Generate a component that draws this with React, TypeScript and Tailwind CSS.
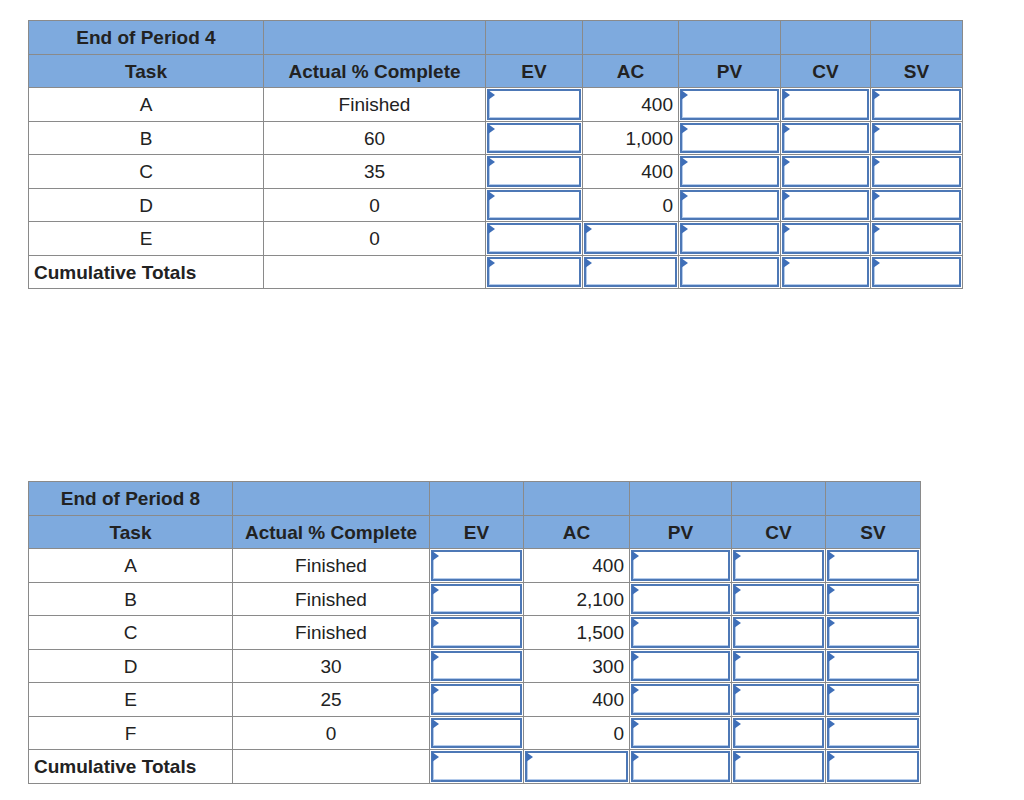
import React from "react";

type Cell = string | null; // null = input box

type Row = { task: string; actual: string; ev: Cell; ac: Cell; pv: Cell; cv: Cell; sv: Cell; total?: boolean };

const period4: Row[] = [
  { task: "A", actual: "Finished", ev: null, ac: "400", pv: null, cv: null, sv: null },
  { task: "B", actual: "60", ev: null, ac: "1,000", pv: null, cv: null, sv: null },
  { task: "C", actual: "35", ev: null, ac: "400", pv: null, cv: null, sv: null },
  { task: "D", actual: "0", ev: null, ac: "0", pv: null, cv: null, sv: null },
  { task: "E", actual: "0", ev: null, ac: null, pv: null, cv: null, sv: null },
  { task: "Cumulative Totals", actual: "", ev: null, ac: null, pv: null, cv: null, sv: null, total: true },
];

const period8: Row[] = [
  { task: "A", actual: "Finished", ev: null, ac: "400", pv: null, cv: null, sv: null },
  { task: "B", actual: "Finished", ev: null, ac: "2,100", pv: null, cv: null, sv: null },
  { task: "C", actual: "Finished", ev: null, ac: "1,500", pv: null, cv: null, sv: null },
  { task: "D", actual: "30", ev: null, ac: "300", pv: null, cv: null, sv: null },
  { task: "E", actual: "25", ev: null, ac: "400", pv: null, cv: null, sv: null },
  { task: "F", actual: "0", ev: null, ac: "0", pv: null, cv: null, sv: null },
  { task: "Cumulative Totals", actual: "", ev: null, ac: null, pv: null, cv: null, sv: null, total: true },
];

const td = "border border-[#8a8a8a] p-0 align-middle";
const th = "border border-[#8a8a8a] p-0 bg-[#7eaade] font-bold text-[#222] text-center";

function InputBox({ tall }: { tall: boolean }) {
  return (
    <div className={"relative m-[1px] border-2 border-[#4d78b6] bg-white shadow-[inset_1px_-1px_0_#b4cbeb] " + (tall ? "h-[31px]" : "h-[30px]")}>
      <svg className="absolute -left-[1px] -top-[1px]" width="7" height="10" viewBox="0 0 7 10">
        <polygon points="0,0 7,5 0,10" fill="#3f6fb8" />
      </svg>
    </div>
  );
}

function ValueCell({ v, tall }: { v: Cell; tall: boolean }) {
  const h = tall ? " h-[34px]" : " h-[33px]";
  if (v === null) return <td className={td + h}><InputBox tall={tall} /></td>;
  return <td className={td + h + " text-right pr-[5px]"}>{v}</td>;
}

function PeriodTable({ title, rows, widths }: { title: string; rows: Row[]; widths: number[] }) {
  const total = widths.reduce((a, b) => a + b, 0);
  return (
    <table className="border-collapse table-fixed border border-[#c8c8c8] text-[19px] leading-none text-[#222]" style={{ width: total }}>
      <colgroup>
        {widths.map((w, i) => <col key={i} style={{ width: w }} />)}
      </colgroup>
      <tbody>
        <tr className="h-[34px]">
          <th className={th}>{title}</th>
          <th className={th}></th>
          <th className={th}></th>
          <th className={th}></th>
          <th className={th}></th>
          <th className={th}></th>
          <th className={th}></th>
        </tr>
        <tr className="h-[33px]">
          <th className={th}>Task</th>
          <th className={th}>Actual % Complete</th>
          <th className={th}>EV</th>
          <th className={th}>AC</th>
          <th className={th}>PV</th>
          <th className={th}>CV</th>
          <th className={th}>SV</th>
        </tr>
        {rows.map((r, i) => {
          const tall = i % 2 === 0;
          return (
            <tr key={r.task} className={tall ? "h-[34px]" : "h-[33px]"}>
              <td className={td + (r.total ? " font-bold text-left pl-[5px]" : " text-center")}>{r.task}</td>
              <td className={td + " text-center"}>{r.actual}</td>
              <ValueCell v={r.ev} tall={tall} />
              <ValueCell v={r.ac} tall={tall} />
              <ValueCell v={r.pv} tall={tall} />
              <ValueCell v={r.cv} tall={tall} />
              <ValueCell v={r.sv} tall={tall} />
            </tr>
          );
        })}
      </tbody>
    </table>
  );
}

export default function App() {
  return (
    <div className="w-[1024px] h-[800px] bg-white pl-[28px] pt-[20px] font-['Liberation_Sans',Arial,sans-serif]">
      <PeriodTable title="End of Period 4" rows={period4} widths={[235, 222, 97, 96, 102, 90, 92]} />
      <div className="h-[192px]" />
      <PeriodTable title="End of Period 8" rows={period8} widths={[204, 197, 94, 106, 102, 94, 95]} />
    </div>
  );
}
